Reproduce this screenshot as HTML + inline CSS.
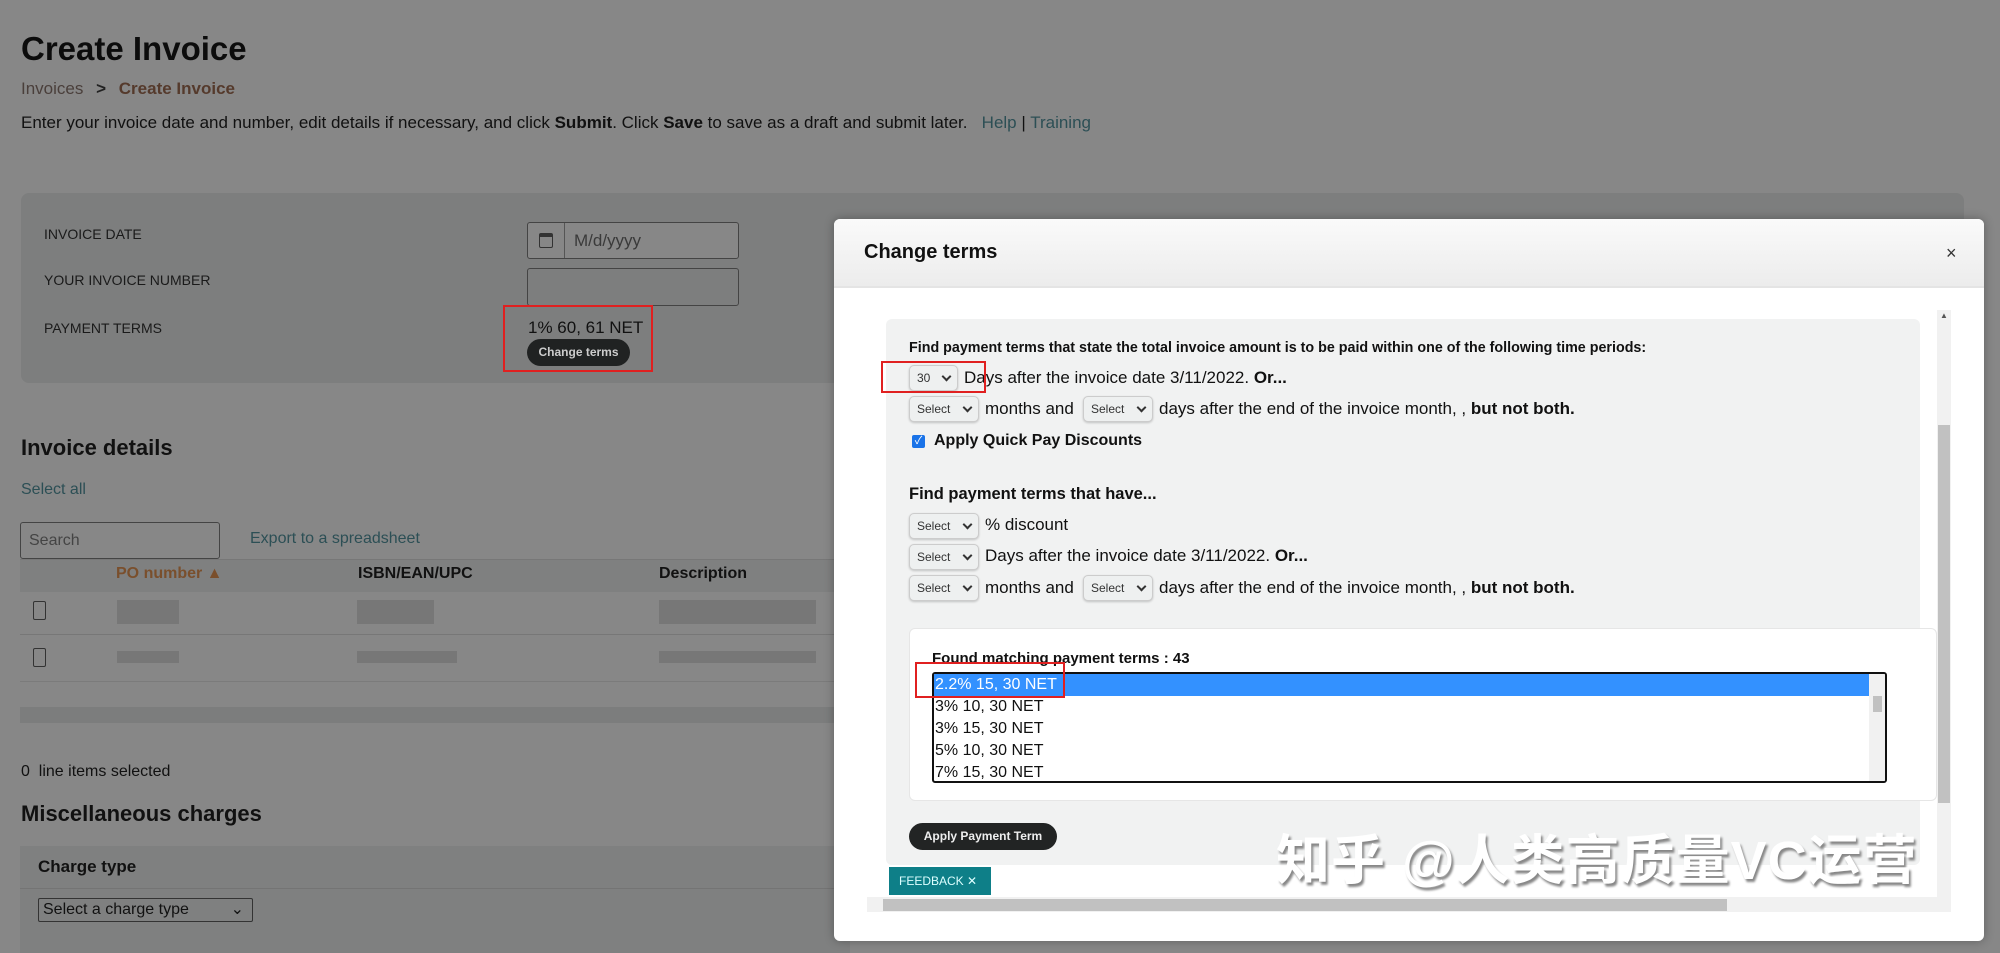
<!DOCTYPE html>
<html><head><meta charset="utf-8"><style>
*{box-sizing:border-box;margin:0;padding:0}
body{width:2000px;height:953px;overflow:hidden;background:#878787;font-family:"Liberation Sans","Noto Sans CJK SC",sans-serif;color:#111;position:relative}
.a{position:absolute;white-space:nowrap}
.sel{position:absolute;height:26px;border:1px solid #ccc;border-radius:5px;background:#eef0f0;box-shadow:0 1px 2px rgba(0,0,0,.2);font-size:12px;color:#333;padding:5px 0 0 7px}
.sel:after{content:"";position:absolute;right:7px;top:7px;width:5px;height:5px;border-right:2px solid #333;border-bottom:2px solid #333;transform:rotate(45deg)}
.t{font-size:17px;color:#111}
.red{position:absolute;border:2px solid #e02020}
.blur{position:absolute;background:#777;height:18px}
</style></head><body>
<div class="a" style="left:21px;top:30px;font-size:33px;font-weight:bold;color:#0c0c0c">Create Invoice</div>
<div class="a" style="left:21px;top:79px;font-size:17px;color:#4a3f3b">Invoices <span style="color:#222;font-weight:bold;margin:0 8px">&gt;</span> <b style="color:#553a2c">Create Invoice</b></div>
<div class="a" style="left:21px;top:113px;font-size:17px;color:#111">Enter your invoice date and number, edit details if necessary, and click <b>Submit</b>. Click <b>Save</b> to save as a draft and submit later. &nbsp; <span style="color:#2c4f55">Help</span> | <span style="color:#2c4f55">Training</span></div>

<div class="a" style="left:21px;top:193px;width:1943px;height:190px;background:#7d7e7e;border-radius:8px"></div>
<div class="a" style="left:44px;top:226px;font-size:14px;color:#1a1a1a">INVOICE DATE</div>
<div class="a" style="left:44px;top:272px;font-size:14px;color:#1a1a1a">YOUR INVOICE NUMBER</div>
<div class="a" style="left:44px;top:320px;font-size:14px;color:#1a1a1a">PAYMENT TERMS</div>
<div class="a" style="left:527px;top:222px;width:212px;height:37px;border:1px solid #444;border-radius:3px;background:#878787"><div class="a" style="left:0;top:0;width:37px;height:35px;border-right:1px solid #555"></div><div class="a" style="left:11px;top:10px;width:14px;height:15px;border:1.5px solid #333;border-radius:2px;border-top-width:4px"></div><div class="a" style="left:46px;top:8px;font-size:17px;color:#3a3a3a">M/d/yyyy</div></div>
<div class="a" style="left:527px;top:268px;width:212px;height:38px;border:1px solid #444;border-radius:3px"></div>
<div class="a" style="left:528px;top:318px;font-size:17px;color:#111">1% 60, 61 NET</div>
<div class="a" style="left:527px;top:339px;width:103px;height:27px;background:#202222;border-radius:14px;color:#ccc;font-size:12px;font-weight:bold;text-align:center;line-height:27px">Change terms</div>
<div class="red" style="left:503px;top:305px;width:150px;height:67px"></div>

<div class="a" style="left:21px;top:435px;font-size:22px;font-weight:bold;color:#111">Invoice details</div>
<div class="a" style="left:21px;top:481px;font-size:16px;color:#2c4f55">Select all</div>
<div class="a" style="left:20px;top:522px;width:200px;height:37px;border:1px solid #444;border-radius:3px"><div class="a" style="left:8px;top:9px;font-size:16px;color:#444">Search</div></div>
<div class="a" style="left:250px;top:530px;font-size:16px;color:#2c4f55">Export to a spreadsheet</div>
<div class="a" style="left:20px;top:559px;width:830px;height:33px;background:#7f8080;border-top:1px solid #777"></div>
<div class="a" style="left:116px;top:565px;font-size:16px;font-weight:bold;color:#7a4f2c">PO number ▲</div>
<div class="a" style="left:358px;top:565px;font-size:16px;font-weight:bold;color:#111">ISBN/EAN/UPC</div>
<div class="a" style="left:659px;top:565px;font-size:16px;font-weight:bold;color:#111">Description</div>
<div class="a" style="left:20px;top:634px;width:830px;height:1px;background:#777"></div>
<div class="a" style="left:20px;top:681px;width:830px;height:1px;background:#7b7b7b"></div>
<div class="a" style="left:33px;top:601px;width:13px;height:19px;border:1.5px solid #333;border-radius:2px"></div>
<div class="a" style="left:33px;top:648px;width:13px;height:19px;border:1.5px solid #333;border-radius:2px"></div>
<div class="blur" style="left:117px;top:600px;width:62px;height:24px"></div>
<div class="blur" style="left:357px;top:600px;width:77px;height:24px"></div>
<div class="blur" style="left:659px;top:600px;width:157px;height:24px"></div>
<div class="blur" style="left:117px;top:651px;width:62px;height:12px"></div>
<div class="blur" style="left:357px;top:651px;width:100px;height:12px"></div>
<div class="blur" style="left:659px;top:651px;width:157px;height:12px"></div>
<div class="a" style="left:20px;top:707px;width:830px;height:16px;background:#7c7d7d"></div>
<div class="a" style="left:21px;top:763px;font-size:16px;color:#111">0 &nbsp;line items selected</div>
<div class="a" style="left:21px;top:801px;font-size:22px;font-weight:bold;color:#111">Miscellaneous charges</div>
<div class="a" style="left:20px;top:846px;width:830px;height:107px;background:#7f8080"></div>
<div class="a" style="left:20px;top:888px;width:830px;height:1px;background:#747474"></div>
<div class="a" style="left:38px;top:857px;font-size:17px;font-weight:bold;color:#111">Charge type</div>
<div class="a" style="left:38px;top:898px;width:215px;height:24px;border:1px solid #333;border-radius:2px;font-size:16px;padding:2px 0 0 4px;color:#111">Select a charge type<span style="position:absolute;right:8px;top:0">⌄</span></div>

<!-- modal -->
<div class="a" style="left:834px;top:219px;width:1150px;height:722px;background:#fff;border-radius:6px;box-shadow:0 0 10px rgba(0,0,0,.3);overflow:hidden">
 <div class="a" style="left:0;top:0;width:1150px;height:69px;background:linear-gradient(#fafafa,#ececec);border-bottom:2px solid #e4e4e4"></div>
 <div class="a" style="left:30px;top:22px;font-size:20px;font-weight:bold;color:#111">Change terms</div>
 <div class="a" style="left:1112px;top:24px;font-size:18px;color:#333">×</div>
 <div class="a" style="left:52px;top:100px;width:1034px;height:546px;background:#f1f2f2;border-radius:6px"></div>
 <div class="a" style="left:1103px;top:91px;width:14px;height:602px;background:#f1f1f1"></div>
 <div class="a" style="left:1104px;top:206px;width:12px;height:378px;background:#c1c1c1"></div>
 <div class="a" style="left:1106px;top:92px;font-size:8px;color:#555">▲</div>
 <div class="a" style="left:75px;top:121px;font-size:14.3px;font-weight:bold">Find payment terms that state the total invoice amount is to be paid within one of the following time periods:</div>
 <div class="sel" style="left:75px;top:146px;width:49px">30</div>
 <div class="a t" style="left:130px;top:149px">Days after the invoice date 3/11/2022. <b>Or...</b></div>
 <div class="sel" style="left:75px;top:177px;width:70px">Select</div>
 <div class="a t" style="left:151px;top:180px">months and</div>
 <div class="sel" style="left:249px;top:177px;width:70px">Select</div>
 <div class="a t" style="left:325px;top:180px">days after the end of the invoice month, , <b>but not both.</b></div>
 <div class="a" style="left:78px;top:216px;width:13px;height:13px;background:#1a73e8;border-radius:2px;color:#fff;font-size:11px;line-height:13px;text-align:center">✓</div>
 <div class="a" style="left:100px;top:213px;font-size:16px;font-weight:bold">Apply Quick Pay Discounts</div>
 <div class="a" style="left:75px;top:266px;font-size:16.5px;font-weight:bold">Find payment terms that have...</div>
 <div class="sel" style="left:75px;top:294px;width:70px">Select</div>
 <div class="a t" style="left:151px;top:296px">% discount</div>
 <div class="sel" style="left:75px;top:325px;width:70px">Select</div>
 <div class="a t" style="left:151px;top:327px">Days after the invoice date 3/11/2022. <b>Or...</b></div>
 <div class="sel" style="left:75px;top:356px;width:70px">Select</div>
 <div class="a t" style="left:151px;top:359px">months and</div>
 <div class="sel" style="left:249px;top:356px;width:70px">Select</div>
 <div class="a t" style="left:325px;top:359px">days after the end of the invoice month, , <b>but not both.</b></div>
 <div class="a" style="left:75px;top:409px;width:1028px;height:173px;background:#fff;border:1px solid #e6e6e6;border-radius:6px"></div>
 <div class="a" style="left:98px;top:431px;font-size:15px;font-weight:bold">Found matching payment terms : 43</div>
 <div class="a" style="left:98px;top:453px;width:955px;height:111px;border:2px solid #111;border-radius:3px;background:#fff;font-size:16px;line-height:22px;overflow:hidden">
  <div style="background:#3391ff;color:#fff;padding-left:1px;margin-right:16px">2.2% 15, 30 NET</div>
  <div style="padding-left:1px">3% 10, 30 NET</div><div style="padding-left:1px">3% 15, 30 NET</div><div style="padding-left:1px">5% 10, 30 NET</div><div style="padding-left:1px">7% 15, 30 NET</div>
  <div class="a" style="right:0;top:0;width:16px;height:107px;background:#f1f1f1"></div>
  <div class="a" style="right:3px;top:22px;width:9px;height:16px;background:#c1c1c1"></div>
 </div>
 <div class="a" style="left:75px;top:604px;width:148px;height:27px;background:#222424;border-radius:14px;color:#eee;font-size:12px;font-weight:bold;text-align:center;line-height:27px">Apply Payment Term</div>
 <div class="a" style="left:55px;top:648px;width:102px;height:28px;background:#0e7f88;color:#dff;font-size:12px;line-height:28px;padding-left:10px">FEEDBACK ✕</div>
 <div class="a" style="left:33px;top:678px;width:1084px;height:15px;background:#f1f1f1"></div>
 <div class="a" style="left:49px;top:680px;width:844px;height:12px;background:#c1c1c1"></div>
 <div class="a" style="left:442px;top:597px;font-size:54px;color:#fff;font-weight:bold;text-shadow:2px 3px 2px #888;letter-spacing:1px">知乎 @人类高质量VC运营</div>
</div>
<div class="red" style="left:881px;top:361px;width:105px;height:32px"></div>
<div class="red" style="left:915px;top:662px;width:150px;height:36px"></div>
</body></html>
